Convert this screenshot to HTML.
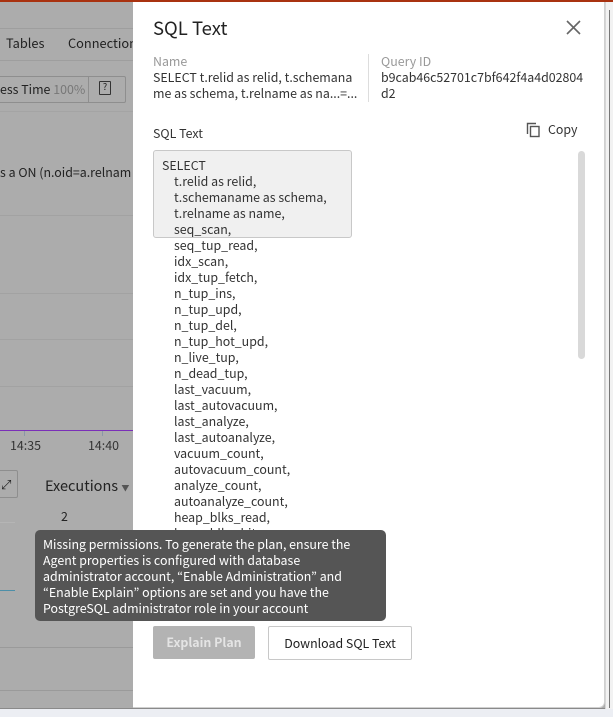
<!DOCTYPE html>
<html><head><meta charset="utf-8"><style>
*{margin:0;padding:0;box-sizing:border-box}
body{width:613px;height:717px;overflow:hidden;position:relative;background:#acacac;font-family:"Noto Sans CJK JP","Liberation Sans",sans-serif;font-size:12.4px;color:#333}
.a{position:absolute;white-space:nowrap}
.hl{position:absolute;height:1px;background:#9e9e9e;left:0;width:133px}
.sql div{height:16px;line-height:16px}
</style></head><body>
<div class="a" style="left:0;top:0;width:613px;height:2px;background:#a93210"></div>
<div class="hl" style="top:28px"></div>
<div class="hl" style="top:60px"></div>
<div class="a" style="left:6px;top:34px;font-size:12.8px;color:#222;line-height:18px">Tables</div>
<div class="a" style="left:68px;top:34px;font-size:12.8px;color:#222;line-height:18px">Connection</div>
<div class="a" style="left:-2px;top:76px;width:128px;height:27px;border:1px solid #8e8e8e;border-radius:2px"></div>
<div class="a" style="left:88px;top:76px;width:1px;height:27px;background:#8e8e8e"></div>
<div class="a" style="left:0;top:81px;line-height:16px;color:#222">ess Time <span style="color:#777">100%</span></div>
<div class="a" style="left:99px;top:81px;width:12px;height:14px;border:1.5px solid #333;border-radius:1px;font-size:9px;line-height:10px;text-align:center;color:#222">?</div>
<div class="hl" style="top:111px;background:#a4a4a4"></div>
<div class="a" style="left:0;top:164px;line-height:16px;color:#222">s a ON (n.oid=a.relnam</div>
<div class="hl" style="top:215px;background:#a2a2a2"></div>
<div class="hl" style="top:293px;background:#a2a2a2"></div>
<div class="hl" style="top:339px;background:#a2a2a2"></div>
<div class="hl" style="top:386px;background:#a2a2a2"></div>
<div class="a" style="left:0;top:430px;width:133px;height:1px;background:#7a2fb8"></div>
<div class="a" style="left:24px;top:431px;width:1px;height:5px;background:#8a97a8"></div>
<div class="a" style="left:102px;top:431px;width:1px;height:5px;background:#8a97a8"></div>
<div class="a" style="left:10px;top:437px;line-height:16px;color:#333">14:35</div>
<div class="a" style="left:88px;top:437px;line-height:16px;color:#333">14:40</div>
<div class="a" style="left:-4px;top:470px;width:22px;height:28px;border:1px solid #8e8e8e;border-radius:2px"></div>
<div class="a" style="left:1px;top:474px;font-size:13px;color:#222">⤢</div>
<div class="a" style="left:45px;top:477px;font-size:14.5px;line-height:18px;color:#222">Executions <span style="font-size:8px;color:#555">▼</span></div>
<div class="a" style="left:61px;top:508px;line-height:16px;color:#222">2</div>
<div class="a" style="left:0;top:522px;width:15px;height:1px;background:#b5b5b5"></div>
<div class="a" style="left:0;top:590px;width:15px;height:1px;background:#4d8fa8"></div>
<div class="hl" style="top:647px;background:#9a9a9a"></div>
<div class="hl" style="top:690px;background:#9a9a9a"></div>
<div class="a" style="left:0;top:708px;width:613px;height:1px;background:#8a8a8a"></div>
<div class="a" style="left:0;top:709px;width:613px;height:8px;background:#eceef3"></div>
<div class="a" style="left:605px;top:2px;width:8px;height:707px;background:#f2f2f2;border-left:1px solid #d6d6d6"></div>
<div class="a" style="left:609px;top:10px;width:1px;height:698px;background:#777"></div>
<div class="a" style="left:133px;top:2px;width:472px;height:706px;background:#fff;border-bottom-right-radius:6px;border-right:1px solid #d0d0d0;border-bottom:1px solid #d0d0d0"></div>
<div class="a" style="left:153px;top:15px;font-size:18.5px;line-height:26px;color:#222">SQL Text</div>
<svg class="a" style="left:566px;top:20px" width="15" height="15" viewBox="0 0 15 15"><path d="M1 1L14 14M14 1L1 14" stroke="#666" stroke-width="1.6"/></svg>
<div class="a" style="left:153px;top:53px;line-height:16px;color:#999">Name</div>
<div class="a" style="left:153px;top:69px;line-height:16px">SELECT t.relid as relid, t.schemana</div>
<div class="a" style="left:153px;top:85px;line-height:16px">me as schema, t.relname as na...=...</div>
<div class="a" style="left:368px;top:54px;width:1px;height:48px;background:#ddd"></div>
<div class="a" style="left:381px;top:53px;line-height:16px;color:#999">Query ID</div>
<div class="a" style="left:381px;top:69px;line-height:16px">b9cab46c52701c7bf642f4a4d02804</div>
<div class="a" style="left:381px;top:85px;line-height:16px">d2</div>
<div class="a" style="left:153px;top:125px;line-height:16px">SQL Text</div>
<svg class="a" style="left:526px;top:122px" width="15" height="16" viewBox="0 0 15 16"><path d="M1.5 12V1.5H10" fill="none" stroke="#555" stroke-width="1.4"/><rect x="4.5" y="4.5" width="8.5" height="10" fill="none" stroke="#555" stroke-width="1.4"/></svg>
<div class="a" style="left:548px;top:121px;line-height:16px">Copy</div>
<div class="a" style="left:153px;top:150px;width:199px;height:88px;background:#f0f0f0;border:1px solid #c8c8c8;border-radius:3px"></div>
<div class="a sql" style="left:162px;top:157px">
<div>SELECT</div>
<div style="padding-left:12px">t.relid as relid,</div>
<div style="padding-left:12px">t.schemaname as schema,</div>
<div style="padding-left:12px">t.relname as name,</div>
<div style="padding-left:12px">seq_scan,</div>
<div style="padding-left:12px">seq_tup_read,</div>
<div style="padding-left:12px">idx_scan,</div>
<div style="padding-left:12px">idx_tup_fetch,</div>
<div style="padding-left:12px">n_tup_ins,</div>
<div style="padding-left:12px">n_tup_upd,</div>
<div style="padding-left:12px">n_tup_del,</div>
<div style="padding-left:12px">n_tup_hot_upd,</div>
<div style="padding-left:12px">n_live_tup,</div>
<div style="padding-left:12px">n_dead_tup,</div>
<div style="padding-left:12px">last_vacuum,</div>
<div style="padding-left:12px">last_autovacuum,</div>
<div style="padding-left:12px">last_analyze,</div>
<div style="padding-left:12px">last_autoanalyze,</div>
<div style="padding-left:12px">vacuum_count,</div>
<div style="padding-left:12px">autovacuum_count,</div>
<div style="padding-left:12px">analyze_count,</div>
<div style="padding-left:12px">autoanalyze_count,</div>
<div style="padding-left:12px">heap_blks_read,</div>
<div style="padding-left:12px">heap_blks_hit,</div>
</div>
<div class="a" style="left:578px;top:151px;width:7px;height:208px;background:#d9d9d9;border-radius:4px"></div>
<div class="a" style="left:35px;top:530px;width:351px;height:91px;background:#555;border-radius:5px;color:#fff;padding:6px 0 0 8px;line-height:16px;white-space:normal">Missing permissions. To generate the plan, ensure the<br>Agent properties is configured with database<br>administrator account, “Enable Administration” and<br>“Enable Explain” options are set and you have the<br>PostgreSQL administrator role in your account</div>
<div class="a" style="left:153px;top:626px;width:102px;height:33px;background:#b3b3b3;border-radius:2px;color:#e4e4e4;font-weight:bold;text-align:center;line-height:33px">Explain Plan</div>
<div class="a" style="left:268px;top:626px;width:144px;height:34px;border:1px solid #c8c8c8;border-radius:2px;color:#222;text-align:center;line-height:32px">Download SQL Text</div>
</body></html>
